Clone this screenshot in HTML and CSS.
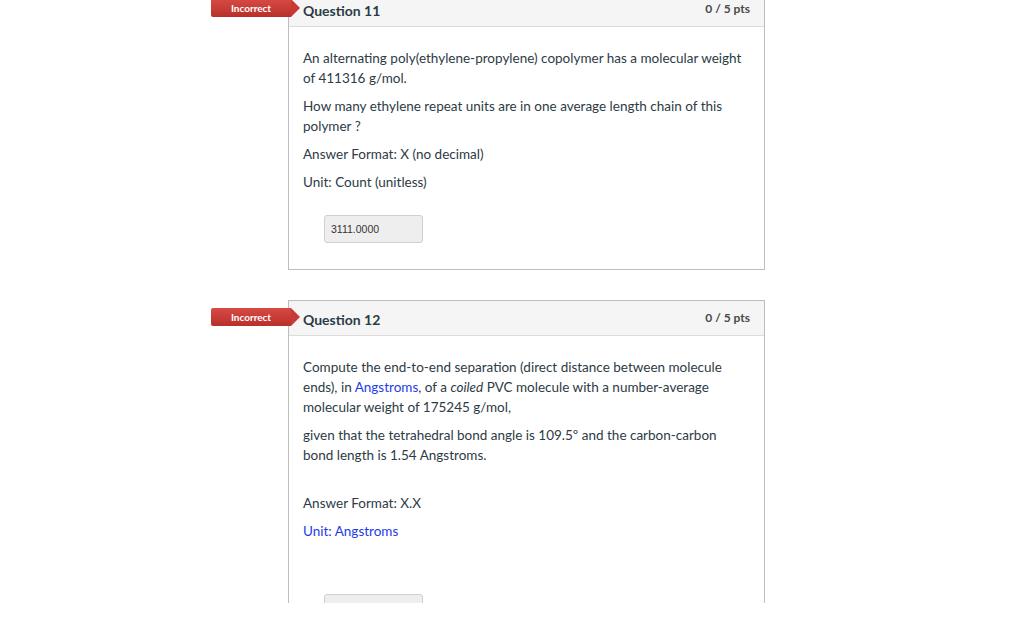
FILE: index.html
```html
<!DOCTYPE html>
<html>
<head>
<meta charset="utf-8">
<link rel="stylesheet" href="styles.css">
</head>
<body>
<div class="viewport">
  <div class="quiz">
    <div class="question q11">
      <div class="badge">Incorrect</div>
      <div class="qhead">
        <span class="qtitle">Question 11</span>
        <span class="pts">0 / 5 pts</span>
      </div>
      <div class="qbody">
        <p>An alternating poly(ethylene-propylene) copolymer has a molecular weight of 411316 g/mol.</p>
        <p>How many ethylene repeat units are in one average length chain of this polymer ?</p>
        <p>Answer Format: X (no decimal)</p>
        <p>Unit: Count (unitless)</p>
        <div class="answer"><span class="input">3111.0000</span></div>
      </div>
    </div>

    <div class="question q12">
      <div class="badge">Incorrect</div>
      <div class="qhead">
        <span class="qtitle">Question 12</span>
        <span class="pts">0 / 5 pts</span>
      </div>
      <div class="qbody">
        <p>Compute the end-to-end separation (direct distance between molecule ends), in <span class="link">Angstroms</span>, of a <em>coiled</em> PVC molecule with a number-average molecular weight of 175245 g/mol,</p>
        <p>given that the tetrahedral bond angle is 109.5º and the carbon-carbon bond length is 1.54 Angstroms.</p>
        <div class="blank"></div>
        <p>Answer Format: X.X</p>
        <p class="link">Unit: Angstroms</p>
        <div class="blank2"></div>
        <div class="answer"><span class="input">3111.0000</span></div>
      </div>
    </div>
  </div>
</div>
</body>
</html>
```

FILE: styles.css
```css
html, body {
  margin: 0;
  padding: 0;
  background: #ffffff;
}
body {
  font-family: Lato, "Noto Sans", sans-serif;
  color: #2d3b45;
  font-size: 14px;
}
.viewport {
  height: 603px;
  overflow: hidden;
}
.quiz {
  width: 477px;
  margin-left: 288px;
  margin-top: -9px;
}
.question {
  position: relative;
  border: 1px solid #bdbdbd;
  box-sizing: border-box;
  margin-bottom: 30px;
}
.badge {
  position: absolute;
  left: -78px;
  top: 7px;
  width: 80px;
  height: 18px;
  line-height: 18px;
  color: #fff;
  font-size: 10px;
  font-weight: 700;
  text-align: center;
  background: linear-gradient(#d84a44, #b8302b);
  border-radius: 2px 0 0 2px;
}
.badge::after {
  content: "";
  position: absolute;
  right: -9px;
  top: 0;
  border-top: 9px solid transparent;
  border-bottom: 9px solid transparent;
  border-left: 9px solid #c73a35;
}
.qhead {
  display: flex;
  justify-content: space-between;
  align-items: center;
  height: 34px;
  padding: 0 14px;
  background: #f5f5f5;
  border-bottom: 1px solid #dcdcdc;
}
.qtitle {
  font-weight: 700;
  font-size: 14px;
  color: #2d3b45;
  padding-top: 2px;
}
.pts {
  font-weight: 700;
  font-size: 12px;
  color: #4a4a4a;
  margin-bottom: 2px;
}
.qbody {
  padding: 21px 14px 26px 14px;
  font-size: 13.5px;
  line-height: 20px;
}
.qbody p {
  margin: 0 0 8px 0;
}
.link {
  color: #1e3ce6;
}
.blank {
  height: 20px;
}
.blank2 {
  height: 30px;
}
.answer {
  padding: 15px 0 0 21px;
}
.input {
  display: inline-block;
  box-sizing: border-box;
  width: 99px;
  height: 28px;
  line-height: 26px;
  padding: 0 6px;
  background: #eeeeee;
  border: 1px solid #cfcfcf;
  border-radius: 3px;
  font-family: "Liberation Sans", Arial, sans-serif;
  font-size: 10.5px;
  color: #333;
}
```
